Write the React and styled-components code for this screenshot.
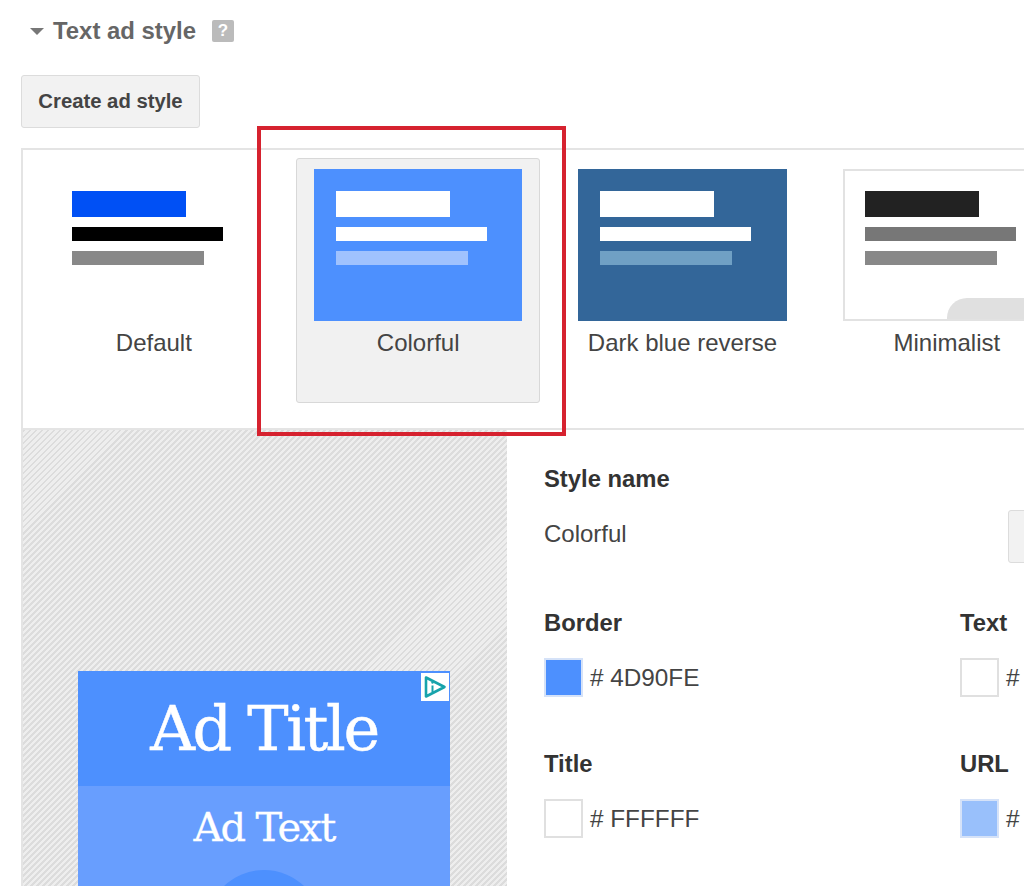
import React from "react";
import styled, { createGlobalStyle } from "styled-components";

const GlobalStyle = createGlobalStyle`
  html, body {
    margin: 0;
    padding: 0;
    background: #fff;
    overflow: hidden;
  }
  * { box-sizing: border-box; }
`;

const Page = styled.div`
  position: relative;
  width: 1024px;
  height: 886px;
  overflow: hidden;
  padding: 15px 0 0 21px;
  font-family: "Liberation Sans", Arial, sans-serif;
  color: #444;
`;

const Header = styled.div`
  display: flex;
  align-items: center;
  height: 32px;
  padding-left: 9px;
`;

const Caret = styled.span`
  width: 0;
  height: 0;
  border-left: 7px solid transparent;
  border-right: 7px solid transparent;
  border-top: 7px solid #777;
  margin-right: 9px;
`;

const Heading = styled.span`
  font-size: 23.9px;
  font-weight: bold;
  color: #666;
`;

const Help = styled.span`
  width: 22px;
  height: 22px;
  margin-left: 16px;
  border-radius: 2px;
  background: #bbb;
  color: #fff;
  font-size: 17px;
  font-weight: bold;
  line-height: 22px;
  text-align: center;
`;

const CreateButton = styled.button`
  display: block;
  width: 179px;
  height: 53px;
  margin: 28px 0 20px;
  padding: 0;
  background: #f2f2f2;
  border: 1px solid #dcdcdc;
  border-radius: 3px;
  color: #444;
  font-family: inherit;
  font-size: 20.3px;
  font-weight: bold;
`;

const Panel = styled.div`
  width: 1100px;
  border-top: 2px solid #e4e4e4;
  border-left: 2px solid #e4e4e4;
`;

const StyleStrip = styled.div`
  display: flex;
  gap: 20px;
  height: 280px;
  padding: 8px 0 0 8.7px;
  border-bottom: 2px solid #e4e4e4;
`;

const StyleCard = styled.div`
  flex: none;
  width: 244.33px;
  height: 245px;
  padding: 10px 17px 0;
  border: 1px solid ${(p) => (p.$selected ? "#d8d8d8" : "transparent")};
  border-radius: 3px;
  background: ${(p) => (p.$selected ? "#f1f1f1" : "transparent")};
`;

const Thumb = styled.div`
  position: relative;
  height: 152px;
  overflow: hidden;
  background: ${(p) => p.$bg};
  border: ${(p) => (p.$outlined ? "2px solid #e2e2e2" : "none")};
  padding: ${(p) => (p.$outlined ? "20px 0 0 20px" : "22px 0 0 22px")};
`;

const ThumbBar = styled.div`
  width: ${(p) => p.$w}px;
  height: ${(p) => p.$h}px;
  margin-bottom: 10px;
  background: ${(p) => p.$color};
`;

const ThumbPill = styled.div`
  position: absolute;
  left: 102px;
  bottom: 0;
  width: 140px;
  height: 21px;
  background: #e0e0e0;
  border-top-left-radius: 20px;
`;

const CardLabel = styled.div`
  margin-top: 8px;
  font-size: 24px;
  line-height: 27px;
  text-align: center;
  white-space: nowrap;
  color: #444;
`;

const Lower = styled.div`
  display: flex;
`;

const PreviewPane = styled.div`
  flex: none;
  width: 484px;
  height: 456px;
  padding: 241px 0 0 55px;
  overflow: hidden;
  background: repeating-linear-gradient(
    135deg,
    #dcdcdc 0,
    #dcdcdc 2px,
    #eeeeee 2px,
    #eeeeee 4.25px
  );
`;

const Ad = styled.div`
  position: relative;
  width: 372px;
  height: 215px;
  overflow: hidden;
  background: #4d90fe;
  text-align: center;
  color: #fff;
  font-family: "DejaVu Serif", "Liberation Serif", serif;
`;

const AdTitle = styled.div`
  height: 115px;
  padding-top: 19px;
  font-size: 62px;
  line-height: 78px;
  letter-spacing: -2.4px;
  -webkit-text-stroke: 0.5px #fff;
`;

const AdBody = styled.div`
  height: 100px;
  padding-top: 16px;
  background: #689efe;
  font-size: 40px;
  line-height: 50px;
  letter-spacing: -1.7px;
  -webkit-text-stroke: 0.3px #fff;
`;

const AdCircle = styled.div`
  width: 116px;
  height: 116px;
  margin: 18px auto 0;
  border-radius: 50%;
  background: #4d90fe;
`;

const AdBadge = styled.div`
  position: absolute;
  top: 2px;
  right: 1px;
  width: 28px;
  height: 28px;
  background: #fff;
`;

const Form = styled.div`
  flex: 1;
  padding: 34px 0 0 37px;
`;

const FieldLabel = styled.div`
  font-size: 23.8px;
  font-weight: bold;
  line-height: 30px;
  color: #333;
`;

const NameRow = styled.div`
  position: relative;
  height: 114px;
  padding-top: 25px;
`;

const NameValue = styled.div`
  font-size: 24px;
  line-height: 30px;
  color: #444;
`;

const EditButton = styled.div`
  position: absolute;
  left: 464px;
  top: 16px;
  width: 80px;
  height: 53px;
  background: #f2f2f2;
  border: 1px solid #dcdcdc;
  border-radius: 3px;
`;

const ColorGrid = styled.div`
  display: grid;
  grid-template-columns: 416px 200px;
  grid-auto-rows: 141px;
`;

const SwatchRow = styled.div`
  display: flex;
  align-items: center;
  margin-top: 20px;
  font-size: 24.3px;
  line-height: 38px;
  white-space: pre;
  color: #444;
`;

const Swatch = styled.span`
  flex: none;
  width: 39px;
  height: 39px;
  margin-right: 7px;
  background: ${(p) => p.$color};
  border: 2px solid ${(p) => (p.$color === "#fff" ? "#e0e0e0" : "#d5e2f8")};
`;

const HighlightBox = styled.div`
  position: absolute;
  left: 257px;
  top: 126px;
  width: 309px;
  height: 310px;
  border: 4px solid #d6222f;
`;

const styles = [
  {
    name: "Default",
    bg: "#fff",
    bars: ["#0050f5", "#000", "#888"],
  },
  {
    name: "Colorful",
    bg: "#4d90fe",
    bars: ["#fff", "#fff", "#a0c2fe"],
    selected: true,
  },
  {
    name: "Dark blue reverse",
    bg: "#336699",
    bars: ["#fff", "#fff", "#70a0c4"],
  },
  {
    name: "Minimalist",
    bg: "#fff",
    bars: ["#222", "#777", "#888"],
    outlined: true,
  },
];

// the right column runs off the page, only the # shows there
const colors = [
  { label: "Border", color: "#4d90fe", value: "# 4D90FE" },
  { label: "Text", color: "#fff", value: "#" },
  { label: "Title", color: "#fff", value: "# FFFFFF" },
  { label: "URL", color: "#99c0fb", value: "#" },
];

const barSizes = [
  [114, 26],
  [151, 14],
  [132, 14],
];

const App = () => {
  return (
    <Page>
      <GlobalStyle />
      <Header>
        <Caret />
        <Heading>Text ad style</Heading>
        <Help>?</Help>
      </Header>
      <CreateButton>Create ad style</CreateButton>
      <Panel>
        <StyleStrip>
          {styles.map((s) => (
            <StyleCard key={s.name} $selected={s.selected}>
              <Thumb $bg={s.bg} $outlined={s.outlined}>
                {s.bars.map((color, i) => (
                  <ThumbBar key={i} $color={color} $w={barSizes[i][0]} $h={barSizes[i][1]} />
                ))}
                {s.outlined && <ThumbPill />}
              </Thumb>
              <CardLabel>{s.name}</CardLabel>
            </StyleCard>
          ))}
        </StyleStrip>
        <Lower>
          <PreviewPane>
            <Ad>
              <AdTitle>Ad Title</AdTitle>
              <AdBody>
                Ad Text
                <AdCircle />
              </AdBody>
              <AdBadge>
                <svg width="28" height="28" viewBox="0 0 28 28" fill="none">
                  <path d="M5 4.5 L23.5 14 L5 23.5 Z" stroke="#17a3ab" strokeWidth="2.6" strokeLinejoin="round" />
                  <path d="M11.5 12.5 V19" stroke="#17a3ab" strokeWidth="2" />
                  <circle cx="11.5" cy="9.6" r="1.2" fill="#17a3ab" />
                </svg>
              </AdBadge>
            </Ad>
          </PreviewPane>
          <Form>
            <FieldLabel>Style name</FieldLabel>
            <NameRow>
              <NameValue>Colorful</NameValue>
              <EditButton />
            </NameRow>
            <ColorGrid>
              {colors.map((c) => (
                <div key={c.label}>
                  <FieldLabel>{c.label}</FieldLabel>
                  <SwatchRow>
                    <Swatch $color={c.color} />
                    {c.value}
                  </SwatchRow>
                </div>
              ))}
            </ColorGrid>
          </Form>
        </Lower>
      </Panel>
      <HighlightBox />
    </Page>
  );
};

export default App;
